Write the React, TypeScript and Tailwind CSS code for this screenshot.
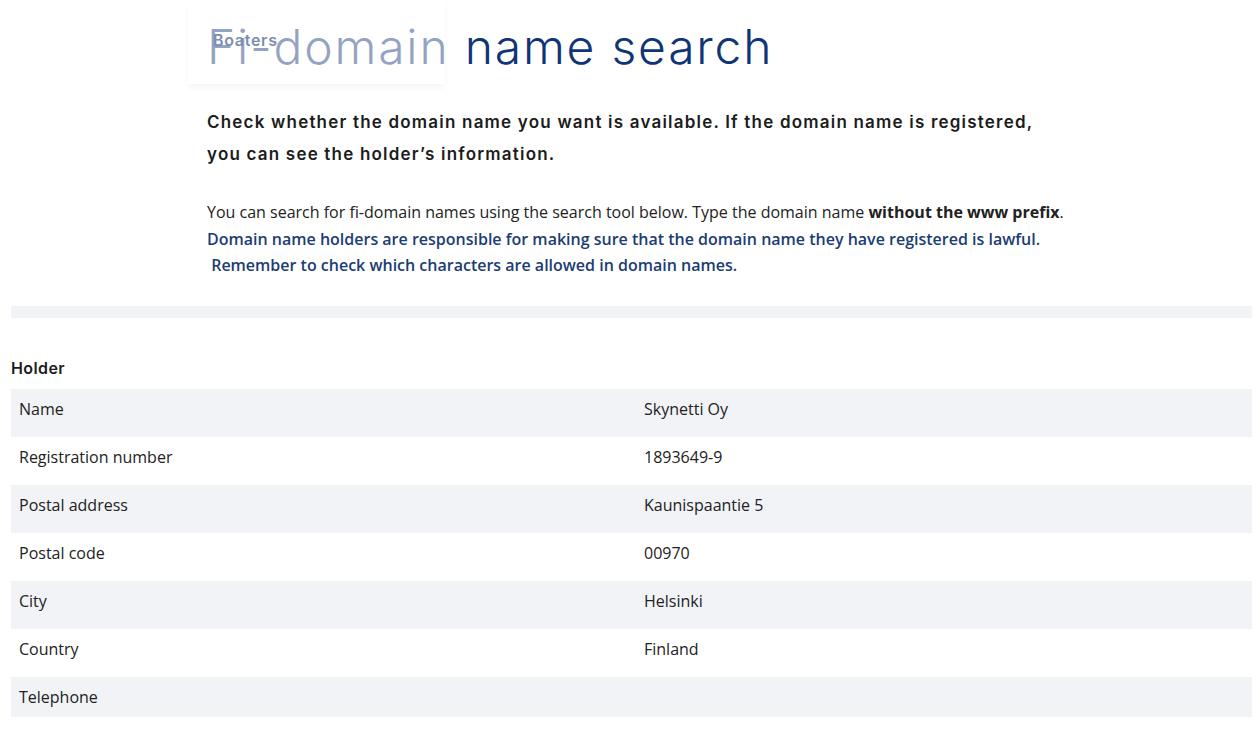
import React from "react";

const rows: [string, string][] = [
  ["Name", "Skynetti Oy"],
  ["Registration number", "1893649-9"],
  ["Postal address", "Kaunispaantie 5"],
  ["Postal code", "00970"],
  ["City", "Helsinki"],
  ["Country", "Finland"],
  ["Telephone", ""],
];

export default function App() {
  return (
    <div className="min-h-[735px] bg-white text-[#222] font-['Open_Sans',sans-serif]">
      {/* heading block with the floating section label */}
      <div className="relative pl-[207px] pt-[18px]">
        <h1 className="font-['Inter',sans-serif] font-light text-[#0f3577] text-[48px] leading-[58px] tracking-[1.8px]">
          Fi-domain name search
        </h1>
        <div className="absolute left-[188px] top-0 w-[257px] h-[84px] bg-white/55 shadow-[0_4px_6px_rgba(0,0,0,0.04)]">
          <span className="absolute left-[25px] top-[28px] font-['Inter',sans-serif] font-semibold text-[16px] tracking-[0.7px] text-[#7d8db0]">
            Boaters
          </span>
        </div>
      </div>

      <div className="pl-[207px] pt-[30px]">
        <p className="font-['Inter',sans-serif] font-semibold text-[17px] leading-[32px] tracking-[1.2px] text-[#1c1c1c] w-[840px]">
          Check whether the domain name you want is available. If the domain name is registered, you can see the holder’s information.
        </p>
        <div className="mt-[29px] text-[16px] leading-[26.5px]">
          <p>
            You can search for fi-domain names using the search tool below. Type the domain name{" "}
            <strong className="font-bold">without the www prefix</strong>.
          </p>
          <p className="font-semibold text-[#1c3c74]">
            Domain name holders are responsible for making sure that the domain name they have registered is lawful.
          </p>
          <p className="font-semibold text-[#1c3c74]">&nbsp;Remember to check which characters are allowed in domain names.</p>
        </div>
      </div>

      <div className="pl-[11px] pr-[8px]">
        <div className="mt-[27px] h-[12px] bg-[#f2f3f6]" />
        <h2 className="mt-[38px] font-['Inter',sans-serif] font-semibold text-[16px] leading-[24px] tracking-[0.4px] text-[#1c1c1c]">
          Holder
        </h2>
        <div className="mt-[9px]">
          {rows.map(([label, value], i) => (
            <div
              key={label}
              className={`grid grid-cols-[625px_1fr] items-start pt-[8px] text-[16px] leading-[24px] ${
                i % 2 === 0 ? "bg-[#f2f3f6]" : "bg-white"
              } ${value ? "h-[48px]" : "h-[40px]"}`}
            >
              <span className="pl-[8px]">{label}</span>
              <span className="pl-[8px]">{value}</span>
            </div>
          ))}
        </div>
      </div>
    </div>
  );
}
